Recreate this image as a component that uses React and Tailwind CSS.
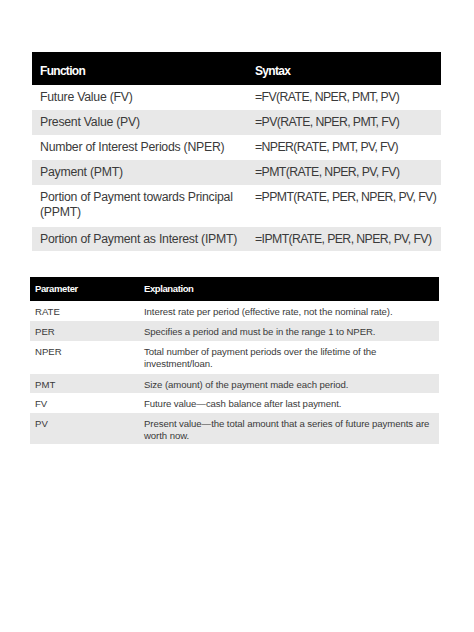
import React from 'react';

const functions = [
  ['Future Value (FV)', '=FV(RATE, NPER, PMT, PV)', 'h-[25px]'],
  ['Present Value (PV)', '=PV(RATE, NPER, PMT, FV)', 'h-[25px]'],
  ['Number of Interest Periods (NPER)', '=NPER(RATE, PMT, PV, FV)', 'h-[25px]'],
  ['Payment (PMT)', '=PMT(RATE, NPER, PV, FV)', 'h-[25px]'],
  ['Portion of Payment towards Principal (PPMT)', '=PPMT(RATE, PER, NPER, PV, FV)', 'h-[42px]'],
  ['Portion of Payment as Interest (IPMT)', '=IPMT(RATE, PER, NPER, PV, FV)', 'h-[24px]'],
];

const params = [
  ['RATE', 'Interest rate per period (effective rate, not the nominal rate).', 'h-[20px]'],
  ['PER', 'Specifies a period and must be in the range 1 to NPER.', 'h-[20px]'],
  ['NPER', 'Total number of payment periods over the lifetime of the investment/loan.', 'h-[33px]'],
  ['PMT', 'Size (amount) of the payment made each period.', 'h-[19px]'],
  ['FV', 'Future value\u2014cash balance after last payment.', 'h-[20px]'],
  ['PV', 'Present value\u2014the total amount that a series of future payments are worth now.', 'h-[31px]'],
];

export default function App() {
  return (
    <div className="w-[474px] h-[632px] bg-white font-['Liberation_Sans',Arial,sans-serif] text-[#3a3a3a] overflow-hidden">
      {/* Functions table */}
      <div className="ml-[32px] mt-[52px] w-[409px]">
        <div className="flex h-[33px] items-end bg-black pb-[5px] text-[12px] font-bold tracking-[-0.7px] text-white">
          <div className="w-[218px] pl-[8px]">Function</div>
          <div className="flex-1 pl-[5px]">Syntax</div>
        </div>
        {functions.map(([name, syntax, h], i) => (
          <div key={name} className={`flex text-[12.3px] leading-[15px] ${h} ${i % 2 ? 'bg-[#e8e8e8]' : ''}`}>
            <div className="w-[218px] pl-[8px] pr-[6px] pt-[5px] tracking-[-0.25px]">{name}</div>
            <div className="flex-1 pl-[5px] pt-[5px] whitespace-nowrap tracking-[-0.6px]">{syntax}</div>
          </div>
        ))}
      </div>

      {/* Parameters table */}
      <div className="ml-[30px] mt-[26px] w-[409px]">
        <div className="flex h-[24px] items-end bg-black pb-[5px] text-[9.5px] font-bold tracking-[-0.4px] text-white">
          <div className="w-[114px] pl-[5px]">Parameter</div>
          <div className="flex-1">Explanation</div>
        </div>
        {params.map(([name, text, h], i) => (
          <div key={name} className={`flex items-start pt-[5px] text-[9.6px] leading-[12px] ${h} ${i % 2 ? 'bg-[#e8e8e8]' : ''}`}>
            <div className="w-[114px] pl-[5px]">{name}</div>
            <div className="flex-1 pr-[1px] tracking-[-0.08px]">{text}</div>
          </div>
        ))}
      </div>
    </div>
  );
}
